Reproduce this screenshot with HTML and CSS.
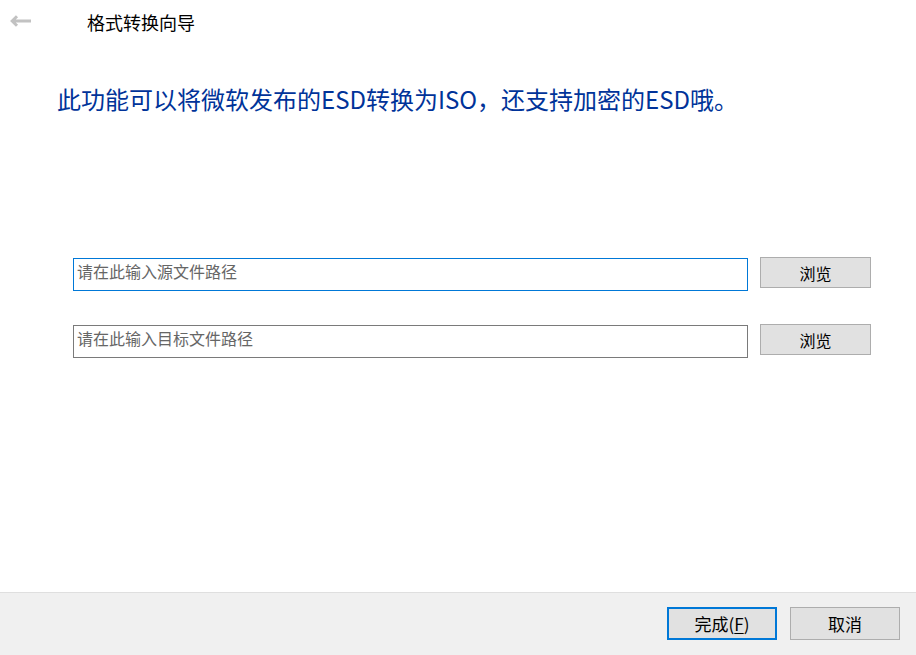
FILE: index.html
```html
<!DOCTYPE html>
<html lang="zh-CN">
<head>
<meta charset="utf-8">
<title>格式转换向导</title>
<link rel="stylesheet" href="styles.css">
</head>
<body>
<div class="window">
  <header class="titlebar">
    <span class="back">
      <svg width="22" height="12" viewBox="0 0 22 12"><path d="M7 1.2 L2.2 6 L7 10.8 M2.2 6 H21" fill="none" stroke="#c2c2c2" stroke-width="3"/></svg>
    </span>
    <span class="title">格式转换向导</span>
  </header>
  <main class="content">
    <h1 class="instruction">此功能可以将微软发布的ESD转换为ISO，还支持加密的ESD哦。</h1>
    <div class="rows">
      <div class="row">
        <input class="path focused" type="text" placeholder="请在此输入源文件路径">
        <button class="browse">浏览</button>
      </div>
      <div class="row">
        <input class="path" type="text" placeholder="请在此输入目标文件路径">
        <button class="browse">浏览</button>
      </div>
    </div>
  </main>
  <footer class="footer">
    <button class="cmd default">完成(<u>F</u>)</button>
    <button class="cmd">取消</button>
  </footer>
</div>
</body>
</html>
```
FILE: styles.css
```css
* { box-sizing: border-box; }
html, body { margin: 0; padding: 0; background: #ffffff; }
body {
  font-family: "Noto Sans CJK SC", "Noto Sans", sans-serif;
  color: #000;
}
.window {
  width: 916px;
  height: 655px;
  display: flex;
  flex-direction: column;
}
.titlebar {
  height: 44px;
  display: flex;
  align-items: center;
  padding-left: 10px;
}
.back { width: 22px; height: 12px; display: flex; margin-top: -2px; }
.title {
  margin-left: 55px;
  font-size: 18px;
  line-height: 22px;
  color: #000;
}
.content {
  flex: 1;
  padding-left: 57px;
}
.instruction {
  margin: 39px 0 0 0;
  font-size: 24px;
  line-height: 32px;
  font-weight: normal;
  color: #003399;
}
.rows {
  margin-top: 142px;
  padding-left: 16px;
  display: flex;
  flex-direction: column;
  gap: 33px;
}
.row {
  display: flex;
  align-items: flex-start;
}
.path {
  margin-top: 1px;
  width: 675px;
  height: 33px;
  border: 1px solid #7a7a7a;
  padding: 0 3px 8px 3px;
  font-family: inherit;
  font-size: 16px;
  line-height: 20px;
  outline: none;
  background: #fff;
}
.path.focused { border-color: #0078d7; }
.path::placeholder { color: #666666; }
.browse {
  margin-left: 12px;
  width: 111px;
  height: 31px;
  background: #e1e1e1;
  border: 1px solid #adadad;
  font-family: inherit;
  font-size: 16px;
  color: #000;
  padding: 0;
}
.footer {
  height: 63px;
  background: #f0f0f0;
  border-top: 1px solid #dfdfdf;
  display: flex;
  justify-content: flex-end;
  align-items: flex-start;
  padding: 14px 16px 0 0;
  gap: 13px;
}
.cmd {
  width: 110px;
  height: 33px;
  background: #e1e1e1;
  border: 1px solid #adadad;
  font-family: inherit;
  font-size: 17px;
  color: #000;
  padding: 0;
}
.cmd.default { border: 2px solid #0078d7; }
.cmd u { text-decoration-thickness: 1px; text-underline-offset: 2px; }
```
